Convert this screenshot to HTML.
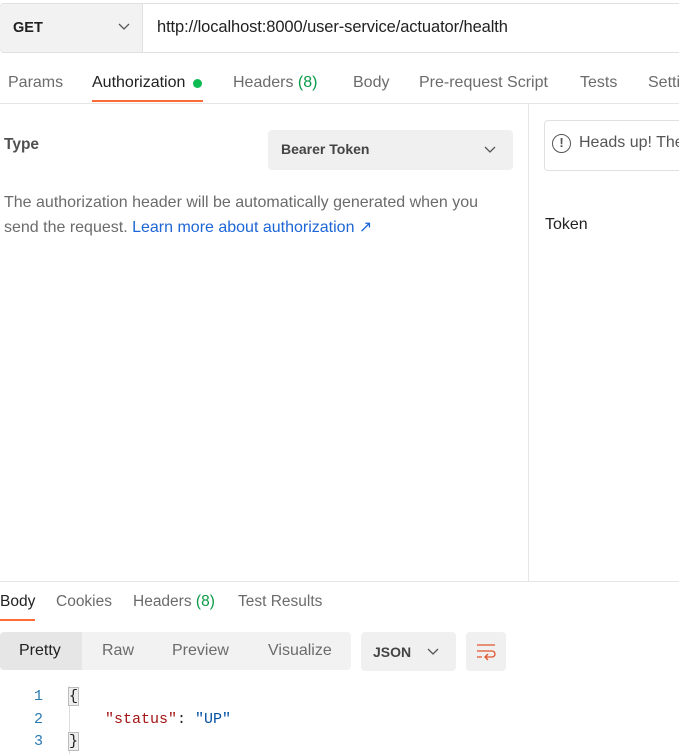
<!DOCTYPE html>
<html><head><style>
*{margin:0;padding:0;box-sizing:border-box}
body{width:679px;height:754px;overflow:hidden;background:#fff;font-family:"Liberation Sans",sans-serif;color:#212121;position:relative;font-size:14px}
.a{position:absolute;white-space:nowrap}
.g{color:#6b6b6b}
.t{font-size:16px;top:74px}
</style></head><body>
<div class="a" style="left:0;top:3px;width:700px;height:50px;border:1px solid #e0e0e0;border-radius:4px"></div>
<div class="a" style="left:0;top:4px;width:143px;height:48px;background:#f2f2f2;border-right:1px solid #e0e0e0;border-radius:4px 0 0 4px"></div>
<div class="a" style="left:13px;top:20px;font-weight:bold;font-size:14.5px">GET</div>
<svg class="a" style="left:118px;top:23px" width="12" height="8"><path d="M1 1l5 5 5-5" fill="none" stroke="#555" stroke-width="1.3"/></svg>
<div class="a" style="left:157px;top:18px;font-size:16.5px;letter-spacing:-0.1px">http://localhost:8000/user-service/actuator/health</div>

<div class="a g t" style="left:8px">Params</div>
<div class="a t" style="left:92px">Authorization</div>
<div class="a" style="left:193px;top:79px;width:9px;height:9px;border-radius:50%;background:#0cbb52"></div>
<div class="a g t" style="left:233px">Headers <span style="color:#0a9a47">(8)</span></div>
<div class="a g t" style="left:353px">Body</div>
<div class="a g t" style="left:419px">Pre-request Script</div>
<div class="a g t" style="left:580px">Tests</div>
<div class="a g t" style="left:648px">Settings</div>
<div class="a" style="left:92px;top:100px;width:111px;height:2px;background:#ff6c37"></div>
<div class="a" style="left:0;top:103px;width:679px;height:1px;background:#e6e6e6"></div>
<div class="a" style="left:528px;top:104px;width:1px;height:477px;background:#e6e6e6"></div>

<div class="a" style="left:4px;top:136px;font-weight:bold;color:#505050;font-size:15.5px">Type</div>
<div class="a" style="left:268px;top:130px;width:245px;height:40px;background:#f0f0f0;border-radius:4px"></div>
<div class="a" style="left:281px;top:141px;font-weight:bold;color:#444;font-size:14px">Bearer Token</div>
<svg class="a" style="left:484px;top:146px" width="12" height="8"><path d="M1 1l5 5 5-5" fill="none" stroke="#555" stroke-width="1.3"/></svg>
<div class="a g" style="left:4px;top:190px;font-size:16px;line-height:25px">The authorization header will be automatically generated when you<br>send the request. <span style="color:#1d66d6">Learn more about authorization ↗</span></div>

<div class="a" style="left:544px;top:120px;width:160px;height:51px;border:1px solid #e0e0e0;border-radius:4px"></div>
<div class="a" style="left:552px;top:134px;width:19px;height:19px;border:1.5px solid #555;border-radius:50%;text-align:center;font-size:13px;line-height:16px;font-weight:bold;color:#555">!</div>
<div class="a g" style="left:579px;top:134px;font-size:16px;color:#555">Heads up! The</div>
<div class="a" style="left:545px;top:216px;font-size:16px">Token</div>

<div class="a" style="left:0;top:581px;width:679px;height:1px;background:#e6e6e6"></div>
<div class="a" style="left:0;top:593px;font-size:15.5px">Body</div>
<div class="a g" style="left:56px;top:593px;font-size:15.5px">Cookies</div>
<div class="a g" style="left:133px;top:593px;font-size:15.5px">Headers <span style="color:#0a9a47">(8)</span></div>
<div class="a g" style="left:238px;top:593px;font-size:15.5px">Test Results</div>
<div class="a" style="left:0;top:619px;width:35px;height:2px;background:#ff6c37"></div>

<div class="a" style="left:0;top:632px;width:351px;height:38px;background:#f2f2f2;border-radius:4px"></div>
<div class="a" style="left:0;top:632px;width:82px;height:38px;background:#e6e6e6;border-radius:4px 0 0 4px"></div>
<div class="a" style="left:19px;top:642px;font-size:16px">Pretty</div>
<div class="a g" style="left:102px;top:642px;font-size:16px">Raw</div>
<div class="a g" style="left:172px;top:642px;font-size:16px">Preview</div>
<div class="a g" style="left:268px;top:642px;font-size:16px">Visualize</div>
<div class="a" style="left:361px;top:632px;width:95px;height:39px;background:#f0f0f0;border-radius:4px"></div>
<div class="a" style="left:373px;top:644px;font-weight:bold;color:#444;font-size:14px">JSON</div>
<svg class="a" style="left:427px;top:648px" width="12" height="8"><path d="M1 1l5 5 5-5" fill="none" stroke="#555" stroke-width="1.3"/></svg>
<div class="a" style="left:466px;top:632px;width:40px;height:39px;background:#f0f0f0;border-radius:4px"></div>
<svg class="a" style="left:475px;top:642px" width="22" height="20"><path d="M2 3h18M2 9h15a3 3 0 0 1 0 6h-6M13 12l-3 3 3 3M2 15h5" fill="none" stroke="#e0542c" stroke-width="1.3"/></svg>

<div class="a" style="left:34px;top:686px;font-family:'Liberation Mono',monospace;font-size:15px;color:#2a7ab0;line-height:22.5px">1<br>2<br>3</div>
<div class="a" style="left:69px;top:686px;width:1px;height:68px;background:#ddd"></div>
<div class="a" style="left:69px;top:686px;font-family:'Liberation Mono',monospace;font-size:15px;line-height:22.5px"><span style="background:#eee;outline:1px solid #bbb">{</span><br>&nbsp;&nbsp;&nbsp;&nbsp;<span style="color:#a31515">"status"</span>: <span style="color:#0451a5">"UP"</span><br><span style="background:#eee;outline:1px solid #bbb">}</span></div>
</body></html>
